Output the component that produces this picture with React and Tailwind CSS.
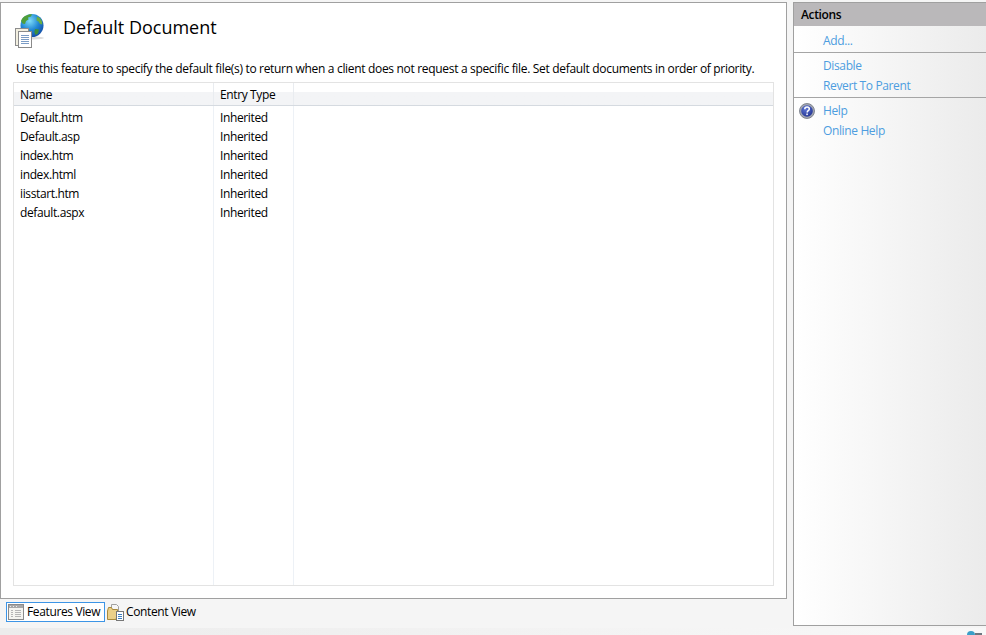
import { useState } from 'react';

const files = ['Default.htm', 'Default.asp', 'index.htm', 'index.html', 'iisstart.htm', 'default.aspx'];

function GlobeIcon() {
  return (
    <svg width="30" height="35" viewBox="0 0 30 35" className="shrink-0">
      <defs>
        <radialGradient id="sea" cx="0.4" cy="0.3" r="0.8">
          <stop offset="0" stopColor="#7fdcf8" />
          <stop offset="0.5" stopColor="#2288d4" />
          <stop offset="1" stopColor="#10409c" />
        </radialGradient>
      </defs>
      <ellipse cx="19" cy="25" rx="10" ry="1.500" fill="#dcdcdc" />
      <circle cx="17" cy="12.500" r="11.500" fill="url(#sea)" />
      <path d="M10.500 3c2-1.500 4.500-2 6.500-1.800l-1 2.300-3 1 .5 2-2.500 1.500-1 3-2.500-.5-1.500-2.500c.5-2.300 2.300-4 4.500-5.500z" fill="#4f9e3a" />
      <path d="M22 3.500l3 1.500 2 3.500.3 3-2.300-.5-1.500-2.500-2-1z" fill="#6aae42" />
      <path d="M20 16l4 .5-1 4-2.500 1.500-1.200-3z" fill="#3f8f3a" />
      <rect x="0.500" y="15.500" width="13" height="17" fill="#f2efe0" stroke="#8d8d8d" />
      <rect x="3.500" y="18.500" width="13" height="16" fill="#fff" stroke="#8a8a8a" />
      <path d="M6 22.500h8M6 24.500h8M6 26.500h8M6 28.500h8M6 30.500h8" stroke="#7a9cc6" />
    </svg>
  );
}

function HelpIcon() {
  return (
    <svg width="16" height="16" viewBox="0 0 16 16" className="shrink-0">
      <defs>
        <radialGradient id="helpBlue" cx="0.4" cy="0.3" r="0.8">
          <stop offset="0" stopColor="#5f78d8" />
          <stop offset="1" stopColor="#1f2f8c" />
        </radialGradient>
      </defs>
      <circle cx="8" cy="8" r="7.500" fill="#a4a8b2" stroke="#6f7480" strokeWidth="0.800" />
      <circle cx="8" cy="8" r="5.800" fill="url(#helpBlue)" />
      <path d="M5.800 6.200c0-1.300 1-2.100 2.300-2.100s2.200.8 2.200 1.900c0 1.700-2.100 1.700-2.100 3.400" fill="none" stroke="#fff" strokeWidth="1.500" />
      <rect x="7.300" y="10.500" width="1.500" height="1.600" fill="#fff" />
    </svg>
  );
}

function FeaturesIcon() {
  return (
    <svg width="16" height="16" viewBox="0 0 16 16" className="shrink-0">
      <rect x="0.500" y="0.500" width="15" height="15" fill="#f4f4f0" stroke="#8a8a8a" />
      <rect x="1" y="1" width="14" height="3" fill="#a8a8a8" />
      <path d="M2 2.500h1M5 2.500h1M8 2.500h1" stroke="#ececec" />
      <path d="M3 6.500h2M3 8.500h2M3 10.500h2M3 12.500h2M7 6.500h6M7 8.500h6M7 10.500h6M7 12.500h6" stroke="#b5b5b5" />
    </svg>
  );
}

function ContentIcon() {
  return (
    <svg width="17" height="17" viewBox="0 0 17 17" className="shrink-0">
      <path d="M4.500 0.500h5l2 2v6h-7z" fill="#f6f6f6" stroke="#a0a0a0" />
      <path d="M0.500 7l1-3.500h3l1 2h5V9l-1.500 6.500H.5z" fill="#ecd088" stroke="#a88a3c" />
      <rect x="9.500" y="7.500" width="7" height="9" fill="#fff" stroke="#777" />
      <path d="M11 10.500h4M11 12.500h4M11 14.500h4" stroke="#3f7fc0" />
    </svg>
  );
}

export default function App() {
  const [view, setView] = useState('features');

  return (
    <div className="flex h-[635px] w-[986px] flex-col overflow-hidden bg-[#f5f5f5] pt-[2px] font-['Open_Sans',sans-serif] text-[12px] tracking-[-0.37px] text-black">
      <div className="flex min-h-0 flex-1">
        <div className="flex w-[787px] shrink-0 flex-col">
          <main className="flex h-[597px] flex-col border border-[#a0a0a0] bg-white pl-[12px] pr-[12px]">
            <header className="flex h-[51px] items-start pl-[2px] pt-[10px]">
              <GlobeIcon />
              <h1 className="ml-[18px] text-[18px] leading-[28px] tracking-normal">Default Document</h1>
            </header>
            <p className="mt-[5px] h-[23px] pl-[3px] leading-[20px] tracking-[-0.32px]">
              Use this feature to specify the default file(s) to return when a client does not request a specific file. Set default documents in order of priority.
            </p>
            <div className="mb-[12px] flex min-h-0 w-[761px] flex-1 flex-col border border-[#e3e3e3]">
              <div className="flex h-[23px] shrink-0 border-b border-[#d5dae0] bg-gradient-to-b from-white from-40% to-[#f3f4f6] to-40%">
                <div className="w-[200px] border-r border-[#e9ecf0] pl-[6px] leading-[23px]">Name</div>
                <div className="w-[80px] border-r border-[#e9ecf0] pl-[6px] leading-[23px]">Entry Type</div>
              </div>
              <div className="flex min-h-0 flex-1">
                <div className="w-[200px] border-r border-[#edf1f6] pl-[6px] pt-[2px]">
                  {files.map((name) => (
                    <div key={name} className="h-[19px] leading-[19px]">{name}</div>
                  ))}
                </div>
                <div className="w-[80px] border-r border-[#edf1f6] pl-[6px] pt-[2px]">
                  {files.map((name) => (
                    <div key={name} className="h-[19px] leading-[19px]">Inherited</div>
                  ))}
                </div>
              </div>
            </div>
          </main>
          <div className="flex items-center pl-[6px] pt-[3px]">
            <button
              onClick={() => setView('features')}
              className={`flex h-[20px] w-[99px] items-center gap-[3px] whitespace-nowrap border pl-[1px] ${view === 'features' ? 'border-[#3d95e6] bg-white' : 'border-transparent'}`}
            >
              <FeaturesIcon />
              <span>Features View</span>
            </button>
            <button
              onClick={() => setView('content')}
              className={`flex h-[20px] items-center gap-[2px] whitespace-nowrap border pl-[1px] pr-[2px] ${view === 'content' ? 'border-[#3d95e6] bg-white' : 'border-transparent'}`}
            >
              <ContentIcon />
              <span>Content View</span>
            </button>
          </div>
        </div>
        <aside className="mb-[2px] ml-[6px] flex min-w-0 flex-1 flex-col border-b border-l border-t border-[#a0a0a0] bg-gradient-to-r from-white to-[#ebebeb] text-[#4d9de0]">
          <div className="h-[23px] shrink-0 bg-[#bab8ba] pl-[7px] font-semibold leading-[24px] text-black">Actions</div>
          <div className="flex h-[26px] items-center pl-[29px] pt-[3px]">Add...</div>
          <div className="h-px bg-[#a5a5a5]" />
          <div className="mt-[3px] flex h-[20px] items-center pl-[29px]">Disable</div>
          <div className="flex h-[20px] items-center pl-[29px]">Revert To Parent</div>
          <div className="mt-[1px] h-px bg-[#a5a5a5]" />
          <div className="mt-[3px] flex h-[20px] items-center gap-[8px] pl-[5px]">
            <HelpIcon />
            <span>Help</span>
          </div>
          <div className="flex h-[20px] items-center pl-[29px]">Online Help</div>
        </aside>
      </div>
      <div className="relative h-[7px] shrink-0 bg-gradient-to-r from-[#ececec] to-[#f8f8f8]">
        <div className="absolute left-[967px] top-[3px] h-[4px] w-[8px] rounded-t-full bg-[#3a9fc8]" />
        <div className="absolute left-[975px] top-[5px] h-[2px] w-[7px] bg-[#6d7680]" />
      </div>
    </div>
  );
}
